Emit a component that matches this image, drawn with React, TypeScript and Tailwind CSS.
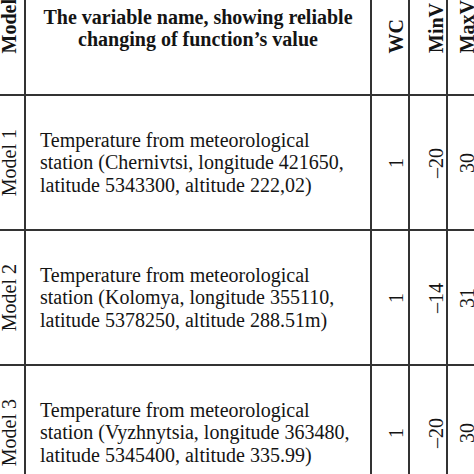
const serif = { fontFamily: '"Liberation Serif", "Times New Roman", serif' };

type Row = {
  model: string;
  lines: string[];
  wc: string;
  minV: string;
  maxV: string;
};

const rows: Row[] = [
  {
    model: "Model 1",
    lines: [
      "Temperature from meteorological",
      "station (Chernivtsi, longitude 421650,",
      "latitude 5343300, altitude 222,02)",
    ],
    wc: "1",
    minV: "\u201320",
    maxV: "30",
  },
  {
    model: "Model 2",
    lines: [
      "Temperature from meteorological",
      "station (Kolomya, longitude 355110,",
      "latitude 5378250, altitude 288.51m)",
    ],
    wc: "1",
    minV: "\u201314",
    maxV: "31",
  },
  {
    model: "Model 3",
    lines: [
      "Temperature from meteorological",
      "station (Vyzhnytsia, longitude 363480,",
      "latitude 5345400, altitude 335.99)",
    ],
    wc: "1",
    minV: "\u201320",
    maxV: "30",
  },
];

function Rot({ children, bold }: { children: React.ReactNode; bold?: boolean }) {
  return (
    <span
      className={`[writing-mode:vertical-rl] rotate-180 whitespace-nowrap text-[20px] leading-[20px] ${
        bold ? "font-bold" : ""
      }`}
    >
      {children}
    </span>
  );
}

export default function App() {
  return (
    <div className="w-[474px] h-[474px] overflow-hidden bg-white text-[#141414]" style={serif}>
      <div className="-ml-[6px] w-[492px]">
        {/* Header */}
        <div className="flex h-[94px]">
          <div className="w-[30px] flex justify-center items-end pb-[41px]">
            <Rot bold>Model</Rot>
          </div>
          <div className="w-[346px] border-l-2 border-[#333] pt-[6px] text-center font-bold text-[20px] leading-[22px]">
            The variable name, showing reliable
            <br />
            changing of function’s value
          </div>
          <div className="w-[38px] border-l-2 border-[#333] flex justify-center items-end pb-[41px] pl-[12px]">
            <Rot bold>WC</Rot>
          </div>
          <div className="w-[38px] border-l-2 border-[#333] flex justify-center items-end pb-[41px] pl-[16px]">
            <Rot bold>MinV</Rot>
          </div>
          <div className="w-[40px] border-l-2 border-[#333] flex justify-center items-end pb-[41px]">
            <Rot bold>MaxV</Rot>
          </div>
        </div>

        {rows.map((r) => (
          <div key={r.model} className="flex h-[135px] border-t-2 border-[#333]">
            <div className="w-[30px] flex justify-center items-center">
              <Rot>{r.model}</Rot>
            </div>
            <div className="w-[346px] border-l-2 border-[#333] flex flex-col justify-center pl-[14px] text-[20px] leading-[22.5px] whitespace-nowrap">
              {r.lines.map((l) => (
                <div key={l}>{l}</div>
              ))}
            </div>
            <div className="w-[38px] border-l-2 border-[#333] flex justify-center items-center pl-[12px]">
              <Rot>{r.wc}</Rot>
            </div>
            <div className="w-[38px] border-l-2 border-[#333] flex justify-center items-center pl-[16px]">
              <Rot>{r.minV}</Rot>
            </div>
            <div className="w-[40px] border-l-2 border-[#333] flex justify-center items-center">
              <Rot>{r.maxV}</Rot>
            </div>
          </div>
        ))}
      </div>
    </div>
  );
}
